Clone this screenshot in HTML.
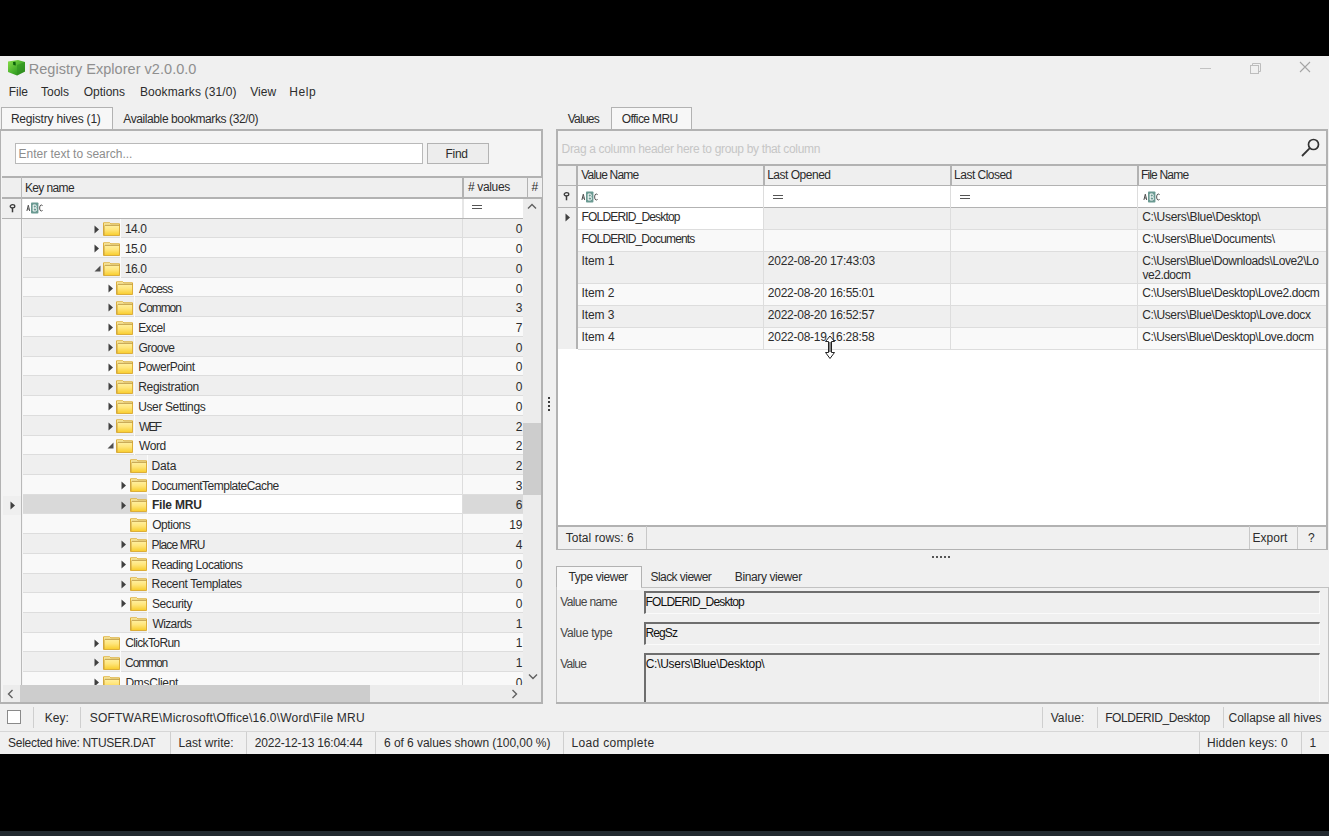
<!DOCTYPE html>
<html><head><meta charset="utf-8"><style>
html,body{margin:0;padding:0;width:1329px;height:836px;overflow:hidden;background:#000}
body{position:relative;font-family:"Liberation Sans", sans-serif}
div{position:absolute;box-sizing:border-box}
.t{white-space:nowrap;font-family:"Liberation Sans", sans-serif}
svg{position:absolute;overflow:visible}
</style></head><body>
<svg style="left:0;top:0" width="0" height="0"><defs>
<linearGradient id="fg" x1="0" y1="0" x2="0" y2="1"><stop offset="0" stop-color="#fff6b8"/><stop offset="0.55" stop-color="#ffe57a"/><stop offset="1" stop-color="#f8cc2a"/></linearGradient>
<linearGradient id="gc" x1="0" y1="0" x2="1" y2="1"><stop offset="0" stop-color="#8be04a"/><stop offset="0.6" stop-color="#3ea827"/><stop offset="1" stop-color="#2b7d1c"/></linearGradient>
</defs></svg>
<div style="left:0px;top:56px;width:1329px;height:698px;background:#f0f0f0"></div>
<div style="left:0px;top:830.7px;width:1329px;height:5.3px;background:#22292f"></div>
<svg style="left:6px;top:58px" width="20" height="19" viewBox="0 0 20 19">
<path d="M2 3.5 L12 2 L19 4 L19 13.5 L11 17.5 L2 14 Z" fill="url(#gc)"/>
<path d="M11 7 L19 4 L19 13.5 L11 17.5 Z" fill="#2f8f1f" opacity="0.55"/>
<path d="M7 4 L9.5 3.8 L9.8 7.5 L7.3 7 Z" fill="#0a620a"/>
</svg>
<div class="t" style="left:28.76px;top:62.32px;font-size:14.5px;line-height:14.5px;color:#8f8f8f;letter-spacing:0.034px;">Registry Explorer v2.0.0.0</div>
<div style="left:1200px;top:68px;width:11px;height:1.2px;background:#c2c2c2"></div>
<svg style="left:1248px;top:61px" width="14" height="14" viewBox="0 0 14 14">
<rect x="2.5" y="4.5" width="8" height="8" fill="none" stroke="#bdbdbd"/>
<path d="M4.5 4.5 V2.5 H12.5 V10.5 H10.5" fill="none" stroke="#bdbdbd"/></svg>
<svg style="left:1299px;top:61px" width="12" height="12" viewBox="0 0 12 12">
<path d="M1 1 L11 11 M11 1 L1 11" stroke="#a5a5a5" stroke-width="1.1"/></svg>
<div class="t" style="left:8.70px;top:86.24px;font-size:12px;line-height:12px;color:#2c2c2c;letter-spacing:0.000px;">File</div>
<div class="t" style="left:41.00px;top:86.24px;font-size:12px;line-height:12px;color:#2c2c2c;letter-spacing:0.000px;">Tools</div>
<div class="t" style="left:83.70px;top:86.24px;font-size:12px;line-height:12px;color:#2c2c2c;letter-spacing:0.000px;">Options</div>
<div class="t" style="left:139.89px;top:86.24px;font-size:12px;line-height:12px;color:#2c2c2c;letter-spacing:0.128px;">Bookmarks (31/0)</div>
<div class="t" style="left:250.30px;top:86.24px;font-size:12px;line-height:12px;color:#2c2c2c;letter-spacing:0.000px;">View</div>
<div class="t" style="left:289.15px;top:86.24px;font-size:12px;line-height:12px;color:#2c2c2c;letter-spacing:0.609px;">Help</div>
<div style="left:1px;top:107px;width:112px;height:24px;background:#f7f7f7;border:1px solid #b2b2b2;border-bottom:none"></div>
<div class="t" style="left:10.89px;top:113.14px;font-size:12px;line-height:12px;color:#2c2c2c;letter-spacing:-0.198px;">Registry hives (1)</div>
<div class="t" style="left:123.29px;top:113.14px;font-size:12px;line-height:12px;color:#2c2c2c;letter-spacing:-0.401px;">Available bookmarks (32/0)</div>
<div style="left:0px;top:129px;width:543px;height:575px;border:2px solid #b2b2b2;border-left-width:1.5px;background:#f4f4f4"></div>
<div style="left:15px;top:143px;width:408px;height:21px;background:#fff;border:1px solid #b9b9b9"></div>
<div class="t" style="left:18.50px;top:147.84px;font-size:12px;line-height:12px;color:#8d8d8d;letter-spacing:-0.008px;">Enter text to search...</div>
<div style="left:427px;top:143px;width:62px;height:21px;background:#ededed;border:1px solid #b3b3b3"></div>
<div class="t" style="left:445.50px;top:147.84px;font-size:12px;line-height:12px;color:#2c2c2c;letter-spacing:-0.297px;">Find</div>
<div style="left:1.5px;top:176px;width:540px;height:22px;background:#efefef"></div>
<div style="left:1.5px;top:176px;width:540px;height:1.5px;background:#b2b2b2"></div>
<div style="left:1.5px;top:197px;width:540px;height:1.5px;background:#b2b2b2"></div>
<div style="left:21px;top:176px;width:1px;height:509px;background:#b9b9b9"></div>
<div style="left:462px;top:176px;width:1.5px;height:22px;background:#b2b2b2"></div>
<div style="left:526.5px;top:176px;width:1.5px;height:22px;background:#b2b2b2"></div>
<div class="t" style="left:24.90px;top:181.84px;font-size:12px;line-height:12px;color:#2c2c2c;letter-spacing:-0.623px;">Key name</div>
<div class="t" style="left:467.93px;top:180.84px;font-size:12px;line-height:12px;color:#2c2c2c;letter-spacing:-0.332px;"># values</div>
<div class="t" style="left:531.50px;top:180.84px;font-size:12px;line-height:12px;color:#2c2c2c;letter-spacing:0.000px;">#</div>
<div style="left:22.5px;top:198.5px;width:501px;height:19px;background:#fff"></div>
<div style="left:1.5px;top:198.5px;width:19.5px;height:20px;background:#efefef"></div>
<div style="left:1.5px;top:217.5px;width:521.5px;height:1.5px;background:#b2b2b2"></div>
<div style="left:462px;top:198.5px;width:1.5px;height:19px;background:#e6e6e6"></div>
<svg style="left:9px;top:203.5px" width="7" height="9" viewBox="0 0 7 9">
<ellipse cx="3.5" cy="2.3" rx="2.3" ry="1.6" fill="none" stroke="#3a3a3a" stroke-width="1.3"/><path d="M3.5 3.8 V8.3" stroke="#3a3a3a" stroke-width="1.5"/></svg>
<svg style="left:26px;top:202px" width="18" height="12" viewBox="0 0 18 12">
<rect x="5" y="0.5" width="7.4" height="11" rx="0.8" fill="#6a9a92"/>
<path d="M0.9 9 L2.3 3.2 L3.7 9 M1.4 7 H3.2" fill="none" stroke="#505050" stroke-width="1"/>
<path d="M7.2 3 V9 H9.4 Q10.6 9 10.6 7.5 Q10.6 6 9.3 6 H7.2 M9.3 6 Q10.3 6 10.3 4.5 Q10.3 3 9.2 3 H7.2" fill="none" stroke="#fff" stroke-width="1"/>
<path d="M16.6 3.6 Q16 3 15.2 3 Q13.6 3 13.6 6 Q13.6 9 15.2 9 Q16 9 16.6 8.4" fill="none" stroke="#555" stroke-width="1"/>
</svg>
<div style="left:472px;top:204.5px;width:10px;height:1.2px;background:#555"></div>
<div style="left:472px;top:207.5px;width:10px;height:1.2px;background:#555"></div>
<div style="left:523px;top:198.5px;width:18px;height:486.5px;background:#ececec"></div>
<div style="left:523px;top:423px;width:18px;height:72px;background:#cdcdcd"></div>
<svg style="left:527px;top:203px" width="10" height="7" viewBox="0 0 10 7"><path d="M1 5.5 L5 1.5 L9 5.5" fill="none" stroke="#606060" stroke-width="1.4"/></svg>
<svg style="left:527.5px;top:673px" width="10" height="7" viewBox="0 0 10 7"><path d="M1 1.5 L5 5.5 L9 1.5" fill="none" stroke="#606060" stroke-width="1.4"/></svg>
<div style="left:0;top:0;width:1329px;height:836px;clip-path:inset(219px 806px 151px 22.5px)">
<div style="left:22.5px;top:218.60px;width:501px;height:19.72px;background:#efefef"></div>
<div style="left:22.5px;top:237.32px;width:501px;height:1px;background:#dddddd"></div>
<div style="left:120.00px;top:218.60px;width:1px;height:19.72px;background:#fbfbfb"></div>
<div style="left:462px;top:218.60px;width:1px;height:19.72px;background:#dddddd"></div>
<svg style="left:94.00px;top:224.60px" width="6" height="9" viewBox="0 0 6 9"><path d="M0.5 0.5 L5 4.5 L0.5 8.5 Z" fill="#404040"/></svg>
<svg style="left:102.50px;top:222.10px" width="17" height="14" viewBox="0 0 17 14">
<path d="M0.5 0.8 H6.8 L7.8 1.8 H16.5 V13.5 H0.5 Z" fill="url(#fg)" stroke="#dcae3a" stroke-width="1"/>
<path d="M1.5 3.3 H16.5" stroke="#b99540" stroke-width="1.1"/>
<path d="M1 4 V13" stroke="#c9a040" stroke-width="1"/>
</svg>
<div class="t" style="left:124.90px;top:223.34px;font-size:12px;line-height:12px;color:#2c2c2c;letter-spacing:-0.481px;">14.0</div>
<div class="t" style="right:806.5px;top:223.34px;font-size:12px;line-height:12px;color:#2c2c2c;letter-spacing:0.000px;">0</div>
<div style="left:22.5px;top:238.32px;width:501px;height:19.72px;background:#f9f9f9"></div>
<div style="left:22.5px;top:257.04px;width:501px;height:1px;background:#dddddd"></div>
<div style="left:120.00px;top:238.32px;width:1px;height:19.72px;background:#fbfbfb"></div>
<div style="left:462px;top:238.32px;width:1px;height:19.72px;background:#dddddd"></div>
<svg style="left:94.00px;top:244.32px" width="6" height="9" viewBox="0 0 6 9"><path d="M0.5 0.5 L5 4.5 L0.5 8.5 Z" fill="#404040"/></svg>
<svg style="left:102.50px;top:241.82px" width="17" height="14" viewBox="0 0 17 14">
<path d="M0.5 0.8 H6.8 L7.8 1.8 H16.5 V13.5 H0.5 Z" fill="url(#fg)" stroke="#dcae3a" stroke-width="1"/>
<path d="M1.5 3.3 H16.5" stroke="#b99540" stroke-width="1.1"/>
<path d="M1 4 V13" stroke="#c9a040" stroke-width="1"/>
</svg>
<div class="t" style="left:124.89px;top:243.06px;font-size:12px;line-height:12px;color:#2c2c2c;letter-spacing:-0.488px;">15.0</div>
<div class="t" style="right:806.5px;top:243.06px;font-size:12px;line-height:12px;color:#2c2c2c;letter-spacing:0.000px;">0</div>
<div style="left:22.5px;top:258.04px;width:501px;height:19.72px;background:#efefef"></div>
<div style="left:22.5px;top:276.76px;width:501px;height:1px;background:#dddddd"></div>
<div style="left:120.00px;top:258.04px;width:1px;height:19.72px;background:#fbfbfb"></div>
<div style="left:462px;top:258.04px;width:1px;height:19.72px;background:#dddddd"></div>
<svg style="left:93.50px;top:264.54px" width="7" height="7" viewBox="0 0 7 7"><path d="M6.5 0.5 L6.5 6.5 L0.5 6.5 Z" fill="#505050"/></svg>
<svg style="left:102.50px;top:261.54px" width="17" height="14" viewBox="0 0 17 14">
<path d="M0.5 0.8 H6.8 L7.8 1.8 H16.5 V13.5 H0.5 Z" fill="url(#fg)" stroke="#dcae3a" stroke-width="1"/>
<path d="M1.5 3.3 H16.5" stroke="#b99540" stroke-width="1.1"/>
<path d="M1 4 V13" stroke="#c9a040" stroke-width="1"/>
</svg>
<div class="t" style="left:124.90px;top:262.78px;font-size:12px;line-height:12px;color:#2c2c2c;letter-spacing:-0.481px;">16.0</div>
<div class="t" style="right:806.5px;top:262.78px;font-size:12px;line-height:12px;color:#2c2c2c;letter-spacing:0.000px;">0</div>
<div style="left:22.5px;top:277.76px;width:501px;height:19.72px;background:#f9f9f9"></div>
<div style="left:22.5px;top:296.48px;width:501px;height:1px;background:#dddddd"></div>
<div style="left:133.50px;top:277.76px;width:1px;height:19.72px;background:#fbfbfb"></div>
<div style="left:462px;top:277.76px;width:1px;height:19.72px;background:#dddddd"></div>
<svg style="left:107.50px;top:283.76px" width="6" height="9" viewBox="0 0 6 9"><path d="M0.5 0.5 L5 4.5 L0.5 8.5 Z" fill="#404040"/></svg>
<svg style="left:116.00px;top:281.26px" width="17" height="14" viewBox="0 0 17 14">
<path d="M0.5 0.8 H6.8 L7.8 1.8 H16.5 V13.5 H0.5 Z" fill="url(#fg)" stroke="#dcae3a" stroke-width="1"/>
<path d="M1.5 3.3 H16.5" stroke="#b99540" stroke-width="1.1"/>
<path d="M1 4 V13" stroke="#c9a040" stroke-width="1"/>
</svg>
<div class="t" style="left:139.00px;top:282.50px;font-size:12px;line-height:12px;color:#2c2c2c;letter-spacing:-0.900px;">Access</div>
<div class="t" style="right:806.5px;top:282.50px;font-size:12px;line-height:12px;color:#2c2c2c;letter-spacing:0.000px;">0</div>
<div style="left:22.5px;top:297.48px;width:501px;height:19.72px;background:#efefef"></div>
<div style="left:22.5px;top:316.20px;width:501px;height:1px;background:#dddddd"></div>
<div style="left:133.50px;top:297.48px;width:1px;height:19.72px;background:#fbfbfb"></div>
<div style="left:462px;top:297.48px;width:1px;height:19.72px;background:#dddddd"></div>
<svg style="left:107.50px;top:303.48px" width="6" height="9" viewBox="0 0 6 9"><path d="M0.5 0.5 L5 4.5 L0.5 8.5 Z" fill="#404040"/></svg>
<svg style="left:116.00px;top:300.98px" width="17" height="14" viewBox="0 0 17 14">
<path d="M0.5 0.8 H6.8 L7.8 1.8 H16.5 V13.5 H0.5 Z" fill="url(#fg)" stroke="#dcae3a" stroke-width="1"/>
<path d="M1.5 3.3 H16.5" stroke="#b99540" stroke-width="1.1"/>
<path d="M1 4 V13" stroke="#c9a040" stroke-width="1"/>
</svg>
<div class="t" style="left:138.60px;top:302.22px;font-size:12px;line-height:12px;color:#2c2c2c;letter-spacing:-1.088px;">Common</div>
<div class="t" style="right:806.5px;top:302.22px;font-size:12px;line-height:12px;color:#2c2c2c;letter-spacing:0.000px;">3</div>
<div style="left:22.5px;top:317.20px;width:501px;height:19.72px;background:#f9f9f9"></div>
<div style="left:22.5px;top:335.92px;width:501px;height:1px;background:#dddddd"></div>
<div style="left:133.50px;top:317.20px;width:1px;height:19.72px;background:#fbfbfb"></div>
<div style="left:462px;top:317.20px;width:1px;height:19.72px;background:#dddddd"></div>
<svg style="left:107.50px;top:323.20px" width="6" height="9" viewBox="0 0 6 9"><path d="M0.5 0.5 L5 4.5 L0.5 8.5 Z" fill="#404040"/></svg>
<svg style="left:116.00px;top:320.70px" width="17" height="14" viewBox="0 0 17 14">
<path d="M0.5 0.8 H6.8 L7.8 1.8 H16.5 V13.5 H0.5 Z" fill="url(#fg)" stroke="#dcae3a" stroke-width="1"/>
<path d="M1.5 3.3 H16.5" stroke="#b99540" stroke-width="1.1"/>
<path d="M1 4 V13" stroke="#c9a040" stroke-width="1"/>
</svg>
<div class="t" style="left:138.15px;top:321.94px;font-size:12px;line-height:12px;color:#2c2c2c;letter-spacing:-0.536px;">Excel</div>
<div class="t" style="right:806.5px;top:321.94px;font-size:12px;line-height:12px;color:#2c2c2c;letter-spacing:0.000px;">7</div>
<div style="left:22.5px;top:336.92px;width:501px;height:19.72px;background:#efefef"></div>
<div style="left:22.5px;top:355.64px;width:501px;height:1px;background:#dddddd"></div>
<div style="left:133.50px;top:336.92px;width:1px;height:19.72px;background:#fbfbfb"></div>
<div style="left:462px;top:336.92px;width:1px;height:19.72px;background:#dddddd"></div>
<svg style="left:107.50px;top:342.92px" width="6" height="9" viewBox="0 0 6 9"><path d="M0.5 0.5 L5 4.5 L0.5 8.5 Z" fill="#404040"/></svg>
<svg style="left:116.00px;top:340.42px" width="17" height="14" viewBox="0 0 17 14">
<path d="M0.5 0.8 H6.8 L7.8 1.8 H16.5 V13.5 H0.5 Z" fill="url(#fg)" stroke="#dcae3a" stroke-width="1"/>
<path d="M1.5 3.3 H16.5" stroke="#b99540" stroke-width="1.1"/>
<path d="M1 4 V13" stroke="#c9a040" stroke-width="1"/>
</svg>
<div class="t" style="left:138.59px;top:341.66px;font-size:12px;line-height:12px;color:#2c2c2c;letter-spacing:-0.579px;">Groove</div>
<div class="t" style="right:806.5px;top:341.66px;font-size:12px;line-height:12px;color:#2c2c2c;letter-spacing:0.000px;">0</div>
<div style="left:22.5px;top:356.64px;width:501px;height:19.72px;background:#f9f9f9"></div>
<div style="left:22.5px;top:375.36px;width:501px;height:1px;background:#dddddd"></div>
<div style="left:133.50px;top:356.64px;width:1px;height:19.72px;background:#fbfbfb"></div>
<div style="left:462px;top:356.64px;width:1px;height:19.72px;background:#dddddd"></div>
<svg style="left:107.50px;top:362.64px" width="6" height="9" viewBox="0 0 6 9"><path d="M0.5 0.5 L5 4.5 L0.5 8.5 Z" fill="#404040"/></svg>
<svg style="left:116.00px;top:360.14px" width="17" height="14" viewBox="0 0 17 14">
<path d="M0.5 0.8 H6.8 L7.8 1.8 H16.5 V13.5 H0.5 Z" fill="url(#fg)" stroke="#dcae3a" stroke-width="1"/>
<path d="M1.5 3.3 H16.5" stroke="#b99540" stroke-width="1.1"/>
<path d="M1 4 V13" stroke="#c9a040" stroke-width="1"/>
</svg>
<div class="t" style="left:138.15px;top:361.38px;font-size:12px;line-height:12px;color:#2c2c2c;letter-spacing:-0.496px;">PowerPoint</div>
<div class="t" style="right:806.5px;top:361.38px;font-size:12px;line-height:12px;color:#2c2c2c;letter-spacing:0.000px;">0</div>
<div style="left:22.5px;top:376.36px;width:501px;height:19.72px;background:#efefef"></div>
<div style="left:22.5px;top:395.08px;width:501px;height:1px;background:#dddddd"></div>
<div style="left:133.50px;top:376.36px;width:1px;height:19.72px;background:#fbfbfb"></div>
<div style="left:462px;top:376.36px;width:1px;height:19.72px;background:#dddddd"></div>
<svg style="left:107.50px;top:382.36px" width="6" height="9" viewBox="0 0 6 9"><path d="M0.5 0.5 L5 4.5 L0.5 8.5 Z" fill="#404040"/></svg>
<svg style="left:116.00px;top:379.86px" width="17" height="14" viewBox="0 0 17 14">
<path d="M0.5 0.8 H6.8 L7.8 1.8 H16.5 V13.5 H0.5 Z" fill="url(#fg)" stroke="#dcae3a" stroke-width="1"/>
<path d="M1.5 3.3 H16.5" stroke="#b99540" stroke-width="1.1"/>
<path d="M1 4 V13" stroke="#c9a040" stroke-width="1"/>
</svg>
<div class="t" style="left:138.15px;top:381.10px;font-size:12px;line-height:12px;color:#2c2c2c;letter-spacing:-0.262px;">Registration</div>
<div class="t" style="right:806.5px;top:381.10px;font-size:12px;line-height:12px;color:#2c2c2c;letter-spacing:0.000px;">0</div>
<div style="left:22.5px;top:396.08px;width:501px;height:19.72px;background:#f9f9f9"></div>
<div style="left:22.5px;top:414.80px;width:501px;height:1px;background:#dddddd"></div>
<div style="left:133.50px;top:396.08px;width:1px;height:19.72px;background:#fbfbfb"></div>
<div style="left:462px;top:396.08px;width:1px;height:19.72px;background:#dddddd"></div>
<svg style="left:107.50px;top:402.08px" width="6" height="9" viewBox="0 0 6 9"><path d="M0.5 0.5 L5 4.5 L0.5 8.5 Z" fill="#404040"/></svg>
<svg style="left:116.00px;top:399.58px" width="17" height="14" viewBox="0 0 17 14">
<path d="M0.5 0.8 H6.8 L7.8 1.8 H16.5 V13.5 H0.5 Z" fill="url(#fg)" stroke="#dcae3a" stroke-width="1"/>
<path d="M1.5 3.3 H16.5" stroke="#b99540" stroke-width="1.1"/>
<path d="M1 4 V13" stroke="#c9a040" stroke-width="1"/>
</svg>
<div class="t" style="left:138.20px;top:400.82px;font-size:12px;line-height:12px;color:#2c2c2c;letter-spacing:-0.376px;">User Settings</div>
<div class="t" style="right:806.5px;top:400.82px;font-size:12px;line-height:12px;color:#2c2c2c;letter-spacing:0.000px;">0</div>
<div style="left:22.5px;top:415.80px;width:501px;height:19.72px;background:#efefef"></div>
<div style="left:22.5px;top:434.52px;width:501px;height:1px;background:#dddddd"></div>
<div style="left:133.50px;top:415.80px;width:1px;height:19.72px;background:#fbfbfb"></div>
<div style="left:462px;top:415.80px;width:1px;height:19.72px;background:#dddddd"></div>
<svg style="left:107.50px;top:421.80px" width="6" height="9" viewBox="0 0 6 9"><path d="M0.5 0.5 L5 4.5 L0.5 8.5 Z" fill="#404040"/></svg>
<svg style="left:116.00px;top:419.30px" width="17" height="14" viewBox="0 0 17 14">
<path d="M0.5 0.8 H6.8 L7.8 1.8 H16.5 V13.5 H0.5 Z" fill="url(#fg)" stroke="#dcae3a" stroke-width="1"/>
<path d="M1.5 3.3 H16.5" stroke="#b99540" stroke-width="1.1"/>
<path d="M1 4 V13" stroke="#c9a040" stroke-width="1"/>
</svg>
<div class="t" style="left:139.00px;top:420.54px;font-size:12px;line-height:12px;color:#2c2c2c;letter-spacing:-1.800px;">WEF</div>
<div class="t" style="right:806.5px;top:420.54px;font-size:12px;line-height:12px;color:#2c2c2c;letter-spacing:0.000px;">2</div>
<div style="left:22.5px;top:435.52px;width:501px;height:19.72px;background:#f9f9f9"></div>
<div style="left:22.5px;top:454.24px;width:501px;height:1px;background:#dddddd"></div>
<div style="left:133.50px;top:435.52px;width:1px;height:19.72px;background:#fbfbfb"></div>
<div style="left:462px;top:435.52px;width:1px;height:19.72px;background:#dddddd"></div>
<svg style="left:107.00px;top:442.02px" width="7" height="7" viewBox="0 0 7 7"><path d="M6.5 0.5 L6.5 6.5 L0.5 6.5 Z" fill="#505050"/></svg>
<svg style="left:116.00px;top:439.02px" width="17" height="14" viewBox="0 0 17 14">
<path d="M0.5 0.8 H6.8 L7.8 1.8 H16.5 V13.5 H0.5 Z" fill="url(#fg)" stroke="#dcae3a" stroke-width="1"/>
<path d="M1.5 3.3 H16.5" stroke="#b99540" stroke-width="1.1"/>
<path d="M1 4 V13" stroke="#c9a040" stroke-width="1"/>
</svg>
<div class="t" style="left:139.00px;top:440.26px;font-size:12px;line-height:12px;color:#2c2c2c;letter-spacing:-0.434px;">Word</div>
<div class="t" style="right:806.5px;top:440.26px;font-size:12px;line-height:12px;color:#2c2c2c;letter-spacing:0.000px;">2</div>
<div style="left:22.5px;top:455.24px;width:501px;height:19.72px;background:#efefef"></div>
<div style="left:22.5px;top:473.96px;width:501px;height:1px;background:#dddddd"></div>
<div style="left:147.00px;top:455.24px;width:1px;height:19.72px;background:#fbfbfb"></div>
<div style="left:462px;top:455.24px;width:1px;height:19.72px;background:#dddddd"></div>
<svg style="left:129.50px;top:458.74px" width="17" height="14" viewBox="0 0 17 14">
<path d="M0.5 0.8 H6.8 L7.8 1.8 H16.5 V13.5 H0.5 Z" fill="url(#fg)" stroke="#dcae3a" stroke-width="1"/>
<path d="M1.5 3.3 H16.5" stroke="#b99540" stroke-width="1.1"/>
<path d="M1 4 V13" stroke="#c9a040" stroke-width="1"/>
</svg>
<div class="t" style="left:151.59px;top:459.98px;font-size:12px;line-height:12px;color:#2c2c2c;letter-spacing:-0.205px;">Data</div>
<div class="t" style="right:806.5px;top:459.98px;font-size:12px;line-height:12px;color:#2c2c2c;letter-spacing:0.000px;">2</div>
<div style="left:22.5px;top:474.96px;width:501px;height:19.72px;background:#f9f9f9"></div>
<div style="left:22.5px;top:493.68px;width:501px;height:1px;background:#dddddd"></div>
<div style="left:147.00px;top:474.96px;width:1px;height:19.72px;background:#fbfbfb"></div>
<div style="left:462px;top:474.96px;width:1px;height:19.72px;background:#dddddd"></div>
<svg style="left:121.00px;top:480.96px" width="6" height="9" viewBox="0 0 6 9"><path d="M0.5 0.5 L5 4.5 L0.5 8.5 Z" fill="#404040"/></svg>
<svg style="left:129.50px;top:478.46px" width="17" height="14" viewBox="0 0 17 14">
<path d="M0.5 0.8 H6.8 L7.8 1.8 H16.5 V13.5 H0.5 Z" fill="url(#fg)" stroke="#dcae3a" stroke-width="1"/>
<path d="M1.5 3.3 H16.5" stroke="#b99540" stroke-width="1.1"/>
<path d="M1 4 V13" stroke="#c9a040" stroke-width="1"/>
</svg>
<div class="t" style="left:151.59px;top:479.70px;font-size:12px;line-height:12px;color:#2c2c2c;letter-spacing:-0.519px;">DocumentTemplateCache</div>
<div class="t" style="right:806.5px;top:479.70px;font-size:12px;line-height:12px;color:#2c2c2c;letter-spacing:0.000px;">3</div>
<div style="left:22.5px;top:494.68px;width:501px;height:19.72px;background:#d9d9d9"></div>
<div style="left:147.00px;top:494.68px;width:315.00px;height:19.72px;background:#fff"></div>
<div style="left:22.5px;top:513.40px;width:501px;height:1px;background:#dddddd"></div>
<div style="left:147.00px;top:494.68px;width:1px;height:19.72px;background:#fbfbfb"></div>
<div style="left:462px;top:494.68px;width:1px;height:19.72px;background:#dddddd"></div>
<svg style="left:121.00px;top:500.68px" width="6" height="9" viewBox="0 0 6 9"><path d="M0.5 0.5 L5 4.5 L0.5 8.5 Z" fill="#404040"/></svg>
<svg style="left:129.50px;top:498.18px" width="17" height="14" viewBox="0 0 17 14">
<path d="M0.5 0.8 H6.8 L7.8 1.8 H16.5 V13.5 H0.5 Z" fill="url(#fg)" stroke="#dcae3a" stroke-width="1"/>
<path d="M1.5 3.3 H16.5" stroke="#b99540" stroke-width="1.1"/>
<path d="M1 4 V13" stroke="#c9a040" stroke-width="1"/>
</svg>
<div class="t" style="left:151.93px;top:499.42px;font-size:12px;line-height:12px;color:#2c2c2c;letter-spacing:-0.198px;font-weight:bold;">File MRU</div>
<div class="t" style="right:806.5px;top:499.42px;font-size:12px;line-height:12px;color:#2c2c2c;letter-spacing:0.000px;">6</div>
<div style="left:22.5px;top:514.40px;width:501px;height:19.72px;background:#f9f9f9"></div>
<div style="left:22.5px;top:533.12px;width:501px;height:1px;background:#dddddd"></div>
<div style="left:147.00px;top:514.40px;width:1px;height:19.72px;background:#fbfbfb"></div>
<div style="left:462px;top:514.40px;width:1px;height:19.72px;background:#dddddd"></div>
<svg style="left:129.50px;top:517.90px" width="17" height="14" viewBox="0 0 17 14">
<path d="M0.5 0.8 H6.8 L7.8 1.8 H16.5 V13.5 H0.5 Z" fill="url(#fg)" stroke="#dcae3a" stroke-width="1"/>
<path d="M1.5 3.3 H16.5" stroke="#b99540" stroke-width="1.1"/>
<path d="M1 4 V13" stroke="#c9a040" stroke-width="1"/>
</svg>
<div class="t" style="left:152.25px;top:519.14px;font-size:12px;line-height:12px;color:#2c2c2c;letter-spacing:-0.469px;">Options</div>
<div class="t" style="right:806.5px;top:519.14px;font-size:12px;line-height:12px;color:#2c2c2c;letter-spacing:0.000px;">19</div>
<div style="left:22.5px;top:534.12px;width:501px;height:19.72px;background:#efefef"></div>
<div style="left:22.5px;top:552.84px;width:501px;height:1px;background:#dddddd"></div>
<div style="left:147.00px;top:534.12px;width:1px;height:19.72px;background:#fbfbfb"></div>
<div style="left:462px;top:534.12px;width:1px;height:19.72px;background:#dddddd"></div>
<svg style="left:121.00px;top:540.12px" width="6" height="9" viewBox="0 0 6 9"><path d="M0.5 0.5 L5 4.5 L0.5 8.5 Z" fill="#404040"/></svg>
<svg style="left:129.50px;top:537.62px" width="17" height="14" viewBox="0 0 17 14">
<path d="M0.5 0.8 H6.8 L7.8 1.8 H16.5 V13.5 H0.5 Z" fill="url(#fg)" stroke="#dcae3a" stroke-width="1"/>
<path d="M1.5 3.3 H16.5" stroke="#b99540" stroke-width="1.1"/>
<path d="M1 4 V13" stroke="#c9a040" stroke-width="1"/>
</svg>
<div class="t" style="left:151.59px;top:538.86px;font-size:12px;line-height:12px;color:#2c2c2c;letter-spacing:-0.851px;">Place MRU</div>
<div class="t" style="right:806.5px;top:538.86px;font-size:12px;line-height:12px;color:#2c2c2c;letter-spacing:0.000px;">4</div>
<div style="left:22.5px;top:553.84px;width:501px;height:19.72px;background:#f9f9f9"></div>
<div style="left:22.5px;top:572.56px;width:501px;height:1px;background:#dddddd"></div>
<div style="left:147.00px;top:553.84px;width:1px;height:19.72px;background:#fbfbfb"></div>
<div style="left:462px;top:553.84px;width:1px;height:19.72px;background:#dddddd"></div>
<svg style="left:121.00px;top:559.84px" width="6" height="9" viewBox="0 0 6 9"><path d="M0.5 0.5 L5 4.5 L0.5 8.5 Z" fill="#404040"/></svg>
<svg style="left:129.50px;top:557.34px" width="17" height="14" viewBox="0 0 17 14">
<path d="M0.5 0.8 H6.8 L7.8 1.8 H16.5 V13.5 H0.5 Z" fill="url(#fg)" stroke="#dcae3a" stroke-width="1"/>
<path d="M1.5 3.3 H16.5" stroke="#b99540" stroke-width="1.1"/>
<path d="M1 4 V13" stroke="#c9a040" stroke-width="1"/>
</svg>
<div class="t" style="left:151.59px;top:558.58px;font-size:12px;line-height:12px;color:#2c2c2c;letter-spacing:-0.506px;">Reading Locations</div>
<div class="t" style="right:806.5px;top:558.58px;font-size:12px;line-height:12px;color:#2c2c2c;letter-spacing:0.000px;">0</div>
<div style="left:22.5px;top:573.56px;width:501px;height:19.72px;background:#efefef"></div>
<div style="left:22.5px;top:592.28px;width:501px;height:1px;background:#dddddd"></div>
<div style="left:147.00px;top:573.56px;width:1px;height:19.72px;background:#fbfbfb"></div>
<div style="left:462px;top:573.56px;width:1px;height:19.72px;background:#dddddd"></div>
<svg style="left:121.00px;top:579.56px" width="6" height="9" viewBox="0 0 6 9"><path d="M0.5 0.5 L5 4.5 L0.5 8.5 Z" fill="#404040"/></svg>
<svg style="left:129.50px;top:577.06px" width="17" height="14" viewBox="0 0 17 14">
<path d="M0.5 0.8 H6.8 L7.8 1.8 H16.5 V13.5 H0.5 Z" fill="url(#fg)" stroke="#dcae3a" stroke-width="1"/>
<path d="M1.5 3.3 H16.5" stroke="#b99540" stroke-width="1.1"/>
<path d="M1 4 V13" stroke="#c9a040" stroke-width="1"/>
</svg>
<div class="t" style="left:151.58px;top:578.30px;font-size:12px;line-height:12px;color:#2c2c2c;letter-spacing:-0.360px;">Recent Templates</div>
<div class="t" style="right:806.5px;top:578.30px;font-size:12px;line-height:12px;color:#2c2c2c;letter-spacing:0.000px;">0</div>
<div style="left:22.5px;top:593.28px;width:501px;height:19.72px;background:#f9f9f9"></div>
<div style="left:22.5px;top:612.00px;width:501px;height:1px;background:#dddddd"></div>
<div style="left:147.00px;top:593.28px;width:1px;height:19.72px;background:#fbfbfb"></div>
<div style="left:462px;top:593.28px;width:1px;height:19.72px;background:#dddddd"></div>
<svg style="left:121.00px;top:599.28px" width="6" height="9" viewBox="0 0 6 9"><path d="M0.5 0.5 L5 4.5 L0.5 8.5 Z" fill="#404040"/></svg>
<svg style="left:129.50px;top:596.78px" width="17" height="14" viewBox="0 0 17 14">
<path d="M0.5 0.8 H6.8 L7.8 1.8 H16.5 V13.5 H0.5 Z" fill="url(#fg)" stroke="#dcae3a" stroke-width="1"/>
<path d="M1.5 3.3 H16.5" stroke="#b99540" stroke-width="1.1"/>
<path d="M1 4 V13" stroke="#c9a040" stroke-width="1"/>
</svg>
<div class="t" style="left:151.96px;top:598.02px;font-size:12px;line-height:12px;color:#2c2c2c;letter-spacing:-0.403px;">Security</div>
<div class="t" style="right:806.5px;top:598.02px;font-size:12px;line-height:12px;color:#2c2c2c;letter-spacing:0.000px;">0</div>
<div style="left:22.5px;top:613.00px;width:501px;height:19.72px;background:#efefef"></div>
<div style="left:22.5px;top:631.72px;width:501px;height:1px;background:#dddddd"></div>
<div style="left:147.00px;top:613.00px;width:1px;height:19.72px;background:#fbfbfb"></div>
<div style="left:462px;top:613.00px;width:1px;height:19.72px;background:#dddddd"></div>
<svg style="left:129.50px;top:616.50px" width="17" height="14" viewBox="0 0 17 14">
<path d="M0.5 0.8 H6.8 L7.8 1.8 H16.5 V13.5 H0.5 Z" fill="url(#fg)" stroke="#dcae3a" stroke-width="1"/>
<path d="M1.5 3.3 H16.5" stroke="#b99540" stroke-width="1.1"/>
<path d="M1 4 V13" stroke="#c9a040" stroke-width="1"/>
</svg>
<div class="t" style="left:152.53px;top:617.74px;font-size:12px;line-height:12px;color:#2c2c2c;letter-spacing:-0.628px;">Wizards</div>
<div class="t" style="right:806.5px;top:617.74px;font-size:12px;line-height:12px;color:#2c2c2c;letter-spacing:0.000px;">1</div>
<div style="left:22.5px;top:632.72px;width:501px;height:19.72px;background:#f9f9f9"></div>
<div style="left:22.5px;top:651.44px;width:501px;height:1px;background:#dddddd"></div>
<div style="left:120.00px;top:632.72px;width:1px;height:19.72px;background:#fbfbfb"></div>
<div style="left:462px;top:632.72px;width:1px;height:19.72px;background:#dddddd"></div>
<svg style="left:94.00px;top:638.72px" width="6" height="9" viewBox="0 0 6 9"><path d="M0.5 0.5 L5 4.5 L0.5 8.5 Z" fill="#404040"/></svg>
<svg style="left:102.50px;top:636.22px" width="17" height="14" viewBox="0 0 17 14">
<path d="M0.5 0.8 H6.8 L7.8 1.8 H16.5 V13.5 H0.5 Z" fill="url(#fg)" stroke="#dcae3a" stroke-width="1"/>
<path d="M1.5 3.3 H16.5" stroke="#b99540" stroke-width="1.1"/>
<path d="M1 4 V13" stroke="#c9a040" stroke-width="1"/>
</svg>
<div class="t" style="left:125.14px;top:637.46px;font-size:12px;line-height:12px;color:#2c2c2c;letter-spacing:-0.626px;">ClickToRun</div>
<div class="t" style="right:806.5px;top:637.46px;font-size:12px;line-height:12px;color:#2c2c2c;letter-spacing:0.000px;">1</div>
<div style="left:22.5px;top:652.44px;width:501px;height:19.72px;background:#efefef"></div>
<div style="left:22.5px;top:671.16px;width:501px;height:1px;background:#dddddd"></div>
<div style="left:120.00px;top:652.44px;width:1px;height:19.72px;background:#fbfbfb"></div>
<div style="left:462px;top:652.44px;width:1px;height:19.72px;background:#dddddd"></div>
<svg style="left:94.00px;top:658.44px" width="6" height="9" viewBox="0 0 6 9"><path d="M0.5 0.5 L5 4.5 L0.5 8.5 Z" fill="#404040"/></svg>
<svg style="left:102.50px;top:655.94px" width="17" height="14" viewBox="0 0 17 14">
<path d="M0.5 0.8 H6.8 L7.8 1.8 H16.5 V13.5 H0.5 Z" fill="url(#fg)" stroke="#dcae3a" stroke-width="1"/>
<path d="M1.5 3.3 H16.5" stroke="#b99540" stroke-width="1.1"/>
<path d="M1 4 V13" stroke="#c9a040" stroke-width="1"/>
</svg>
<div class="t" style="left:125.09px;top:657.18px;font-size:12px;line-height:12px;color:#2c2c2c;letter-spacing:-1.105px;">Common</div>
<div class="t" style="right:806.5px;top:657.18px;font-size:12px;line-height:12px;color:#2c2c2c;letter-spacing:0.000px;">1</div>
<div style="left:22.5px;top:672.16px;width:501px;height:19.72px;background:#f9f9f9"></div>
<div style="left:22.5px;top:690.88px;width:501px;height:1px;background:#dddddd"></div>
<div style="left:120.00px;top:672.16px;width:1px;height:19.72px;background:#fbfbfb"></div>
<div style="left:462px;top:672.16px;width:1px;height:19.72px;background:#dddddd"></div>
<svg style="left:94.00px;top:678.16px" width="6" height="9" viewBox="0 0 6 9"><path d="M0.5 0.5 L5 4.5 L0.5 8.5 Z" fill="#404040"/></svg>
<svg style="left:102.50px;top:675.66px" width="17" height="14" viewBox="0 0 17 14">
<path d="M0.5 0.8 H6.8 L7.8 1.8 H16.5 V13.5 H0.5 Z" fill="url(#fg)" stroke="#dcae3a" stroke-width="1"/>
<path d="M1.5 3.3 H16.5" stroke="#b99540" stroke-width="1.1"/>
<path d="M1 4 V13" stroke="#c9a040" stroke-width="1"/>
</svg>
<div class="t" style="left:125.50px;top:676.90px;font-size:12px;line-height:12px;color:#2c2c2c;letter-spacing:-0.300px;">DmsClient</div>
<div class="t" style="right:806.5px;top:676.90px;font-size:12px;line-height:12px;color:#2c2c2c;letter-spacing:0.000px;">0</div>
</div>
<div style="left:3px;top:495.5px;width:18px;height:19.5px;background:#efefef"></div>
<svg style="left:10.00px;top:500.50px" width="6" height="9" viewBox="0 0 6 9"><path d="M0.5 0.5 L5 4.5 L0.5 8.5 Z" fill="#404040"/></svg>
<div style="left:3px;top:685px;width:520px;height:17px;background:#ececec"></div>
<div style="left:20px;top:685px;width:350px;height:17px;background:#cdcdcd"></div>
<div style="left:523px;top:685px;width:18px;height:17px;background:#ececec"></div>
<svg style="left:7px;top:689px" width="7" height="10" viewBox="0 0 7 10"><path d="M5.5 1 L1.5 5 L5.5 9" fill="none" stroke="#606060" stroke-width="1.4"/></svg>
<svg style="left:511px;top:689px" width="7" height="10" viewBox="0 0 7 10"><path d="M1.5 1 L5.5 5 L1.5 9" fill="none" stroke="#606060" stroke-width="1.4"/></svg>
<div style="left:548px;top:397px;width:2px;height:2px;background:#3c3c3c"></div>
<div style="left:548px;top:401px;width:2px;height:2px;background:#3c3c3c"></div>
<div style="left:548px;top:405px;width:2px;height:2px;background:#3c3c3c"></div>
<div style="left:548px;top:409px;width:2px;height:2px;background:#3c3c3c"></div>
<div class="t" style="left:567.63px;top:113.14px;font-size:12px;line-height:12px;color:#2c2c2c;letter-spacing:-0.732px;">Values</div>
<div style="left:610.5px;top:107px;width:81px;height:24px;background:#f7f7f7;border:1px solid #b2b2b2;border-bottom:none"></div>
<div class="t" style="left:621.82px;top:113.14px;font-size:12px;line-height:12px;color:#2c2c2c;letter-spacing:-0.596px;">Office MRU</div>
<div style="left:556px;top:129px;width:772px;height:421px;border:2px solid #b2b2b2;background:#fff"></div>
<div style="left:558px;top:131px;width:768px;height:33px;background:#f2f2f2"></div>
<div class="t" style="left:561.62px;top:142.84px;font-size:12px;line-height:12px;color:#c6c6c6;letter-spacing:-0.336px;">Drag a column header here to group by that column</div>
<svg style="left:1299px;top:136px" width="22" height="22" viewBox="0 0 22 22">
<circle cx="14.5" cy="8.5" r="5" fill="none" stroke="#333" stroke-width="1.7"/><path d="M10.8 12.2 L3 20" stroke="#333" stroke-width="1.8"/></svg>
<div style="left:558px;top:164px;width:768px;height:21.5px;background:#efefef"></div>
<div style="left:558px;top:186px;width:768px;height:20.5px;background:#fff"></div>
<div style="left:558px;top:164px;width:18px;height:185px;background:#efefef"></div>
<div style="left:558px;top:164px;width:768px;height:1.5px;background:#b2b2b2"></div>
<div style="left:558px;top:184.5px;width:768px;height:1.5px;background:#b2b2b2"></div>
<div style="left:558px;top:206.5px;width:768px;height:1.5px;background:#b2b2b2"></div>
<div style="left:576px;top:164px;width:1.5px;height:185px;background:#b2b2b2"></div>
<div style="left:763px;top:164px;width:1.5px;height:22px;background:#b2b2b2"></div>
<div style="left:763px;top:186px;width:1px;height:163px;background:#dddddd"></div>
<div style="left:950px;top:164px;width:1.5px;height:22px;background:#b2b2b2"></div>
<div style="left:950px;top:186px;width:1px;height:163px;background:#dddddd"></div>
<div style="left:1137px;top:164px;width:1.5px;height:22px;background:#b2b2b2"></div>
<div style="left:1137px;top:186px;width:1px;height:163px;background:#dddddd"></div>
<div class="t" style="left:581.29px;top:168.84px;font-size:12px;line-height:12px;color:#2c2c2c;letter-spacing:-0.802px;">Value Name</div>
<div class="t" style="left:767.15px;top:168.84px;font-size:12px;line-height:12px;color:#2c2c2c;letter-spacing:-0.484px;">Last Opened</div>
<div class="t" style="left:954.10px;top:168.84px;font-size:12px;line-height:12px;color:#2c2c2c;letter-spacing:-0.519px;">Last Closed</div>
<div class="t" style="left:1140.89px;top:168.84px;font-size:12px;line-height:12px;color:#2c2c2c;letter-spacing:-0.811px;">File Name</div>
<svg style="left:563px;top:192px" width="7" height="9" viewBox="0 0 7 9">
<ellipse cx="3.5" cy="2.3" rx="2.3" ry="1.6" fill="none" stroke="#3a3a3a" stroke-width="1.3"/><path d="M3.5 3.8 V8.3" stroke="#3a3a3a" stroke-width="1.5"/></svg>
<svg style="left:581px;top:190.5px" width="18" height="12" viewBox="0 0 18 12">
<rect x="5" y="0.5" width="7.4" height="11" rx="0.8" fill="#6a9a92"/>
<path d="M0.9 9 L2.3 3.2 L3.7 9 M1.4 7 H3.2" fill="none" stroke="#505050" stroke-width="1"/>
<path d="M7.2 3 V9 H9.4 Q10.6 9 10.6 7.5 Q10.6 6 9.3 6 H7.2 M9.3 6 Q10.3 6 10.3 4.5 Q10.3 3 9.2 3 H7.2" fill="none" stroke="#fff" stroke-width="1"/>
<path d="M16.6 3.6 Q16 3 15.2 3 Q13.6 3 13.6 6 Q13.6 9 15.2 9 Q16 9 16.6 8.4" fill="none" stroke="#555" stroke-width="1"/>
</svg>
<div style="left:772.5px;top:195px;width:10px;height:1.2px;background:#555"></div>
<div style="left:772.5px;top:198px;width:10px;height:1.2px;background:#555"></div>
<div style="left:959.5px;top:195px;width:10px;height:1.2px;background:#555"></div>
<div style="left:959.5px;top:198px;width:10px;height:1.2px;background:#555"></div>
<svg style="left:1143px;top:190.5px" width="18" height="12" viewBox="0 0 18 12">
<rect x="5" y="0.5" width="7.4" height="11" rx="0.8" fill="#6a9a92"/>
<path d="M0.9 9 L2.3 3.2 L3.7 9 M1.4 7 H3.2" fill="none" stroke="#505050" stroke-width="1"/>
<path d="M7.2 3 V9 H9.4 Q10.6 9 10.6 7.5 Q10.6 6 9.3 6 H7.2 M9.3 6 Q10.3 6 10.3 4.5 Q10.3 3 9.2 3 H7.2" fill="none" stroke="#fff" stroke-width="1"/>
<path d="M16.6 3.6 Q16 3 15.2 3 Q13.6 3 13.6 6 Q13.6 9 15.2 9 Q16 9 16.6 8.4" fill="none" stroke="#555" stroke-width="1"/>
</svg>
<div style="left:577.5px;top:207.5px;width:748.5px;height:22px;background:#efefef"></div>
<div style="left:577.5px;top:207.5px;width:185.5px;height:22px;background:#fff"></div>
<div style="left:763px;top:207px;width:1px;height:23px;background:#dddddd"></div>
<div style="left:950px;top:207px;width:1px;height:23px;background:#dddddd"></div>
<div style="left:1137px;top:207px;width:1px;height:23px;background:#dddddd"></div>
<div style="left:577.5px;top:228.5px;width:748.5px;height:1px;background:#dddddd"></div>
<div class="t" style="left:581.57px;top:210.84px;font-size:12px;line-height:12px;color:#2c2c2c;letter-spacing:-0.836px;">FOLDERID_Desktop</div>
<div class="t" style="left:1142.14px;top:210.84px;font-size:12px;line-height:12px;color:#2c2c2c;letter-spacing:-0.292px;">C:\Users\Blue\Desktop\</div>
<div style="left:577.5px;top:229.5px;width:748.5px;height:22px;background:#f9f9f9"></div>
<div style="left:763px;top:229px;width:1px;height:23px;background:#dddddd"></div>
<div style="left:950px;top:229px;width:1px;height:23px;background:#dddddd"></div>
<div style="left:1137px;top:229px;width:1px;height:23px;background:#dddddd"></div>
<div style="left:577.5px;top:250.5px;width:748.5px;height:1px;background:#dddddd"></div>
<div class="t" style="left:581.57px;top:232.84px;font-size:12px;line-height:12px;color:#2c2c2c;letter-spacing:-0.841px;">FOLDERID_Documents</div>
<div class="t" style="left:1142.14px;top:232.84px;font-size:12px;line-height:12px;color:#2c2c2c;letter-spacing:-0.367px;">C:\Users\Blue\Documents\</div>
<div style="left:577.5px;top:251.5px;width:748.5px;height:32px;background:#efefef"></div>
<div style="left:763px;top:251px;width:1px;height:33px;background:#dddddd"></div>
<div style="left:950px;top:251px;width:1px;height:33px;background:#dddddd"></div>
<div style="left:1137px;top:251px;width:1px;height:33px;background:#dddddd"></div>
<div style="left:577.5px;top:282.5px;width:748.5px;height:1px;background:#dddddd"></div>
<div class="t" style="left:581.38px;top:254.84px;font-size:12px;line-height:12px;color:#2c2c2c;letter-spacing:-0.052px;">Item 1</div>
<div class="t" style="left:767.86px;top:254.84px;font-size:12px;line-height:12px;color:#2c2c2c;letter-spacing:-0.233px;">2022-08-20 17:43:03</div>
<div class="t" style="left:1142.14px;top:254.84px;font-size:12px;line-height:12px;color:#2c2c2c;letter-spacing:-0.405px;">C:\Users\Blue\Downloads\Love2\Lo</div>
<div class="t" style="left:1142.61px;top:268.54px;font-size:12px;line-height:12px;color:#2c2c2c;letter-spacing:-0.525px;">ve2.docm</div>
<div style="left:577.5px;top:283.5px;width:748.5px;height:22px;background:#f9f9f9"></div>
<div style="left:763px;top:283px;width:1px;height:23px;background:#dddddd"></div>
<div style="left:950px;top:283px;width:1px;height:23px;background:#dddddd"></div>
<div style="left:1137px;top:283px;width:1px;height:23px;background:#dddddd"></div>
<div style="left:577.5px;top:304.5px;width:748.5px;height:1px;background:#dddddd"></div>
<div class="t" style="left:581.38px;top:286.84px;font-size:12px;line-height:12px;color:#2c2c2c;letter-spacing:-0.035px;">Item 2</div>
<div class="t" style="left:767.86px;top:286.84px;font-size:12px;line-height:12px;color:#2c2c2c;letter-spacing:-0.254px;">2022-08-20 16:55:01</div>
<div class="t" style="left:1142.14px;top:286.84px;font-size:12px;line-height:12px;color:#2c2c2c;letter-spacing:-0.399px;">C:\Users\Blue\Desktop\Love2.docm</div>
<div style="left:577.5px;top:305.5px;width:748.5px;height:22px;background:#efefef"></div>
<div style="left:763px;top:305px;width:1px;height:23px;background:#dddddd"></div>
<div style="left:950px;top:305px;width:1px;height:23px;background:#dddddd"></div>
<div style="left:1137px;top:305px;width:1px;height:23px;background:#dddddd"></div>
<div style="left:577.5px;top:326.5px;width:748.5px;height:1px;background:#dddddd"></div>
<div class="t" style="left:581.38px;top:308.84px;font-size:12px;line-height:12px;color:#2c2c2c;letter-spacing:-0.052px;">Item 3</div>
<div class="t" style="left:767.86px;top:308.84px;font-size:12px;line-height:12px;color:#2c2c2c;letter-spacing:-0.259px;">2022-08-20 16:52:57</div>
<div class="t" style="left:1142.14px;top:308.84px;font-size:12px;line-height:12px;color:#2c2c2c;letter-spacing:-0.352px;">C:\Users\Blue\Desktop\Love.docx</div>
<div style="left:577.5px;top:327.5px;width:748.5px;height:22px;background:#f9f9f9"></div>
<div style="left:763px;top:327px;width:1px;height:23px;background:#dddddd"></div>
<div style="left:950px;top:327px;width:1px;height:23px;background:#dddddd"></div>
<div style="left:1137px;top:327px;width:1px;height:23px;background:#dddddd"></div>
<div style="left:577.5px;top:348.5px;width:748.5px;height:1px;background:#dddddd"></div>
<div class="t" style="left:581.38px;top:330.84px;font-size:12px;line-height:12px;color:#2c2c2c;letter-spacing:-0.032px;">Item 4</div>
<div class="t" style="left:767.86px;top:330.84px;font-size:12px;line-height:12px;color:#2c2c2c;letter-spacing:-0.261px;">2022-08-19 16:28:58</div>
<div class="t" style="left:1142.14px;top:330.84px;font-size:12px;line-height:12px;color:#2c2c2c;letter-spacing:-0.388px;">C:\Users\Blue\Desktop\Love.docm</div>
<svg style="left:565.00px;top:213.00px" width="6" height="9" viewBox="0 0 6 9"><path d="M0.5 0.5 L5 4.5 L0.5 8.5 Z" fill="#404040"/></svg>
<svg style="left:824px;top:335px" width="12" height="25" viewBox="0 0 12 25">
<path d="M6 1 L10.5 6.5 H7.5 V17.5 H10.5 L6 23.5 L1.5 17.5 H4.5 V6.5 H1.5 Z" fill="#fff" stroke="#222" stroke-width="1"/>
<rect x="5" y="7" width="2" height="10" fill="#888"/></svg>
<div style="left:558px;top:526px;width:768px;height:23px;background:#f0f0f0"></div>
<div style="left:558px;top:525px;width:768px;height:1.5px;background:#b2b2b2"></div>
<div style="left:646px;top:526px;width:1px;height:23px;background:#c8c8c8"></div>
<div style="left:1248.5px;top:526px;width:1px;height:23px;background:#c8c8c8"></div>
<div style="left:1297px;top:526px;width:1px;height:23px;background:#c8c8c8"></div>
<div class="t" style="left:565.68px;top:531.84px;font-size:12px;line-height:12px;color:#2c2c2c;letter-spacing:0.062px;">Total rows: 6</div>
<div class="t" style="left:1252.58px;top:531.84px;font-size:12px;line-height:12px;color:#2c2c2c;letter-spacing:-0.002px;">Export</div>
<div class="t" style="left:1308.00px;top:531.84px;font-size:12px;line-height:12px;color:#2c2c2c;letter-spacing:0.000px;">?</div>
<div style="left:932px;top:555.5px;width:2px;height:2px;background:#555"></div>
<div style="left:936px;top:555.5px;width:2px;height:2px;background:#555"></div>
<div style="left:940px;top:555.5px;width:2px;height:2px;background:#555"></div>
<div style="left:944px;top:555.5px;width:2px;height:2px;background:#555"></div>
<div style="left:948px;top:555.5px;width:2px;height:2px;background:#555"></div>
<div style="left:556px;top:565.5px;width:86px;height:23px;background:#f7f7f7;border:1px solid #b2b2b2;border-bottom:none"></div>
<div class="t" style="left:568.51px;top:570.64px;font-size:12px;line-height:12px;color:#2c2c2c;letter-spacing:-0.442px;">Type viewer</div>
<div class="t" style="left:650.43px;top:570.64px;font-size:12px;line-height:12px;color:#2c2c2c;letter-spacing:-0.540px;">Slack viewer</div>
<div class="t" style="left:734.86px;top:570.64px;font-size:12px;line-height:12px;color:#2c2c2c;letter-spacing:-0.395px;">Binary viewer</div>
<div style="left:555.5px;top:587px;width:773px;height:117px;border:1.5px solid #c2c2c2;background:#f0f0f0"></div>
<div style="left:557px;top:586.5px;width:84px;height:3px;background:#f7f7f7"></div>
<div style="left:644px;top:591px;width:676px;height:23px;background:#efefef;border-top:2px solid #6e6e6e;border-left:2px solid #6e6e6e;border-bottom:1px solid #fafafa;border-right:1px solid #fafafa"></div>
<div class="t" style="left:560.23px;top:595.64px;font-size:12px;line-height:12px;color:#464646;letter-spacing:-0.661px;">Value name</div>
<div class="t" style="left:645.55px;top:596.24px;font-size:12px;line-height:12px;color:#111;letter-spacing:-0.811px;">FOLDERID_Desktop</div>
<div style="left:644px;top:622px;width:676px;height:23px;background:#efefef;border-top:2px solid #6e6e6e;border-left:2px solid #6e6e6e;border-bottom:1px solid #fafafa;border-right:1px solid #fafafa"></div>
<div class="t" style="left:560.23px;top:626.64px;font-size:12px;line-height:12px;color:#464646;letter-spacing:-0.367px;">Value type</div>
<div class="t" style="left:645.55px;top:627.24px;font-size:12px;line-height:12px;color:#111;letter-spacing:-0.911px;">RegSz</div>
<div style="left:644px;top:653px;width:676px;height:50px;background:#efefef;border-top:2px solid #6e6e6e;border-left:2px solid #6e6e6e;border-bottom:1px solid #fafafa;border-right:1px solid #fafafa"></div>
<div class="t" style="left:560.23px;top:657.64px;font-size:12px;line-height:12px;color:#464646;letter-spacing:-0.772px;">Value</div>
<div class="t" style="left:645.73px;top:658.24px;font-size:12px;line-height:12px;color:#111;letter-spacing:-0.277px;">C:\Users\Blue\Desktop\</div>
<div style="left:556px;top:702px;width:772px;height:2px;background:#b2b2b2"></div>
<div style="left:0px;top:704px;width:1329px;height:27px;background:#f0f0f0"></div>
<div style="left:0px;top:730.5px;width:1329px;height:1.2px;background:#d6d6d6"></div>
<div style="left:7px;top:710px;width:13.5px;height:13.5px;background:#fff;border:1.3px solid #8a8a8a"></div>
<div style="left:33px;top:707px;width:1px;height:21px;background:#cfcfcf"></div>
<div class="t" style="left:44.86px;top:712.14px;font-size:12px;line-height:12px;color:#2c2c2c;letter-spacing:-0.019px;">Key:</div>
<div style="left:80px;top:707px;width:1px;height:21px;background:#cfcfcf"></div>
<div class="t" style="left:89.74px;top:712.14px;font-size:12px;line-height:12px;color:#2c2c2c;letter-spacing:0.210px;">SOFTWARE\Microsoft\Office\16.0\Word\File MRU</div>
<div style="left:1041.5px;top:707px;width:1px;height:21px;background:#cfcfcf"></div>
<div style="left:1096.5px;top:707px;width:1px;height:21px;background:#cfcfcf"></div>
<div style="left:1222.5px;top:707px;width:1px;height:21px;background:#cfcfcf"></div>
<div class="t" style="left:1050.63px;top:712.14px;font-size:12px;line-height:12px;color:#2c2c2c;letter-spacing:0.118px;">Value:</div>
<div class="t" style="left:1105.15px;top:712.14px;font-size:12px;line-height:12px;color:#2c2c2c;letter-spacing:-0.421px;">FOLDERID_Desktop</div>
<div class="t" style="left:1228.60px;top:712.14px;font-size:12px;line-height:12px;color:#2c2c2c;letter-spacing:-0.033px;">Collapse all hives</div>
<div style="left:169.8px;top:732px;width:1px;height:22px;background:#cfcfcf"></div>
<div style="left:246.3px;top:732px;width:1px;height:22px;background:#cfcfcf"></div>
<div style="left:375.2px;top:732px;width:1px;height:22px;background:#cfcfcf"></div>
<div style="left:563px;top:732px;width:1px;height:22px;background:#cfcfcf"></div>
<div style="left:1198.7px;top:732px;width:1px;height:22px;background:#cfcfcf"></div>
<div style="left:1300.6px;top:732px;width:1px;height:22px;background:#cfcfcf"></div>
<div class="t" style="left:8.12px;top:736.94px;font-size:12px;line-height:12px;color:#2c2c2c;letter-spacing:-0.290px;">Selected hive: NTUSER.DAT</div>
<div class="t" style="left:178.50px;top:736.94px;font-size:12px;line-height:12px;color:#2c2c2c;letter-spacing:0.041px;">Last write:</div>
<div class="t" style="left:254.86px;top:736.94px;font-size:12px;line-height:12px;color:#2c2c2c;letter-spacing:-0.204px;">2022-12-13 16:04:44</div>
<div class="t" style="left:384.02px;top:736.94px;font-size:12px;line-height:12px;color:#2c2c2c;letter-spacing:-0.057px;">6 of 6 values shown (100,00 %)</div>
<div class="t" style="left:571.58px;top:736.94px;font-size:12px;line-height:12px;color:#2c2c2c;letter-spacing:0.316px;">Load complete</div>
<div class="t" style="left:1206.89px;top:736.94px;font-size:12px;line-height:12px;color:#2c2c2c;letter-spacing:0.110px;">Hidden keys: 0</div>
<div class="t" style="left:1309.50px;top:736.94px;font-size:12px;line-height:12px;color:#2c2c2c;letter-spacing:0.000px;">1</div>
</body></html>
